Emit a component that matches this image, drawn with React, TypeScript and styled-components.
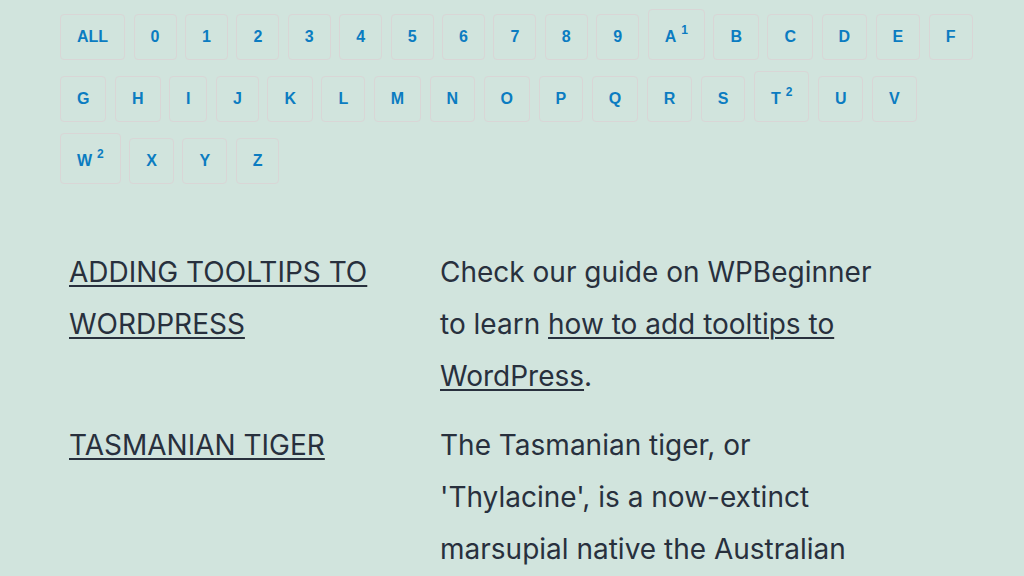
import styled, { createGlobalStyle } from "styled-components";

const GlobalStyle = createGlobalStyle`
  html, body {
    margin: 0;
    padding: 0;
    overflow: hidden;
    background: #d1e4dd;
  }
  body {
    font-family: Inter, "Noto Sans", sans-serif;
    color: #28303d;
  }
`;

const Page = styled.div`
  padding: 9px 0 0 60px;
`;

const LetterBar = styled.ul`
  list-style: none;
  margin: 0;
  padding: 0;
  width: 925px;
  display: flex;
  flex-wrap: wrap;
  align-items: flex-end;
  gap: 11px 8.5px;
`;

const LetterItem = styled.li`
  display: block;
`;

const LetterLink = styled.a<{ $hasCount?: boolean }>`
  display: block;
  box-sizing: border-box;
  padding: ${(p) => (p.$hasCount ? "17px" : "12px")} 16px 12px;
  border: 1px solid #d9d6d6;
  border-radius: 4px;
  font-family: "Liberation Sans", Arial, sans-serif;
  font-weight: 700;
  font-size: 16px;
  line-height: 20px;
  color: #0b7cc1;
  text-decoration: none;
  white-space: nowrap;
`;

const Count = styled.sup`
  display: inline-block;
  margin-left: 5px;
  font-size: 12px;
  line-height: 0;
  vertical-align: 8px;
`;

const Glossary = styled.dl`
  margin: 62px 0 0 9px;
  padding: 0;
  display: grid;
  grid-template-columns: 371px 445px;
  row-gap: 17px;
  font-size: 28px;
  line-height: 52px;
`;

const Term = styled.dt`
  margin: 0;
  text-transform: uppercase;
`;

const Definition = styled.dd`
  margin: 0;
`;

const TextLink = styled.a`
  color: #28303d;
  text-decoration: underline;
  text-decoration-thickness: 1.5px;
  text-underline-offset: 3px;
`;

type Letter = { label: string; count?: number };

const letters: Letter[] = [
  { label: "ALL" },
  ..."0123456789".split("").map((l) => ({ label: l })),
  ..."ABCDEFGHIJKLMNOPQRSTUVWXYZ".split("").map((l) => ({
    label: l,
    count: l === "A" ? 1 : l === "T" || l === "W" ? 2 : undefined,
  })),
];

export default function App() {
  return (
    <Page>
      <GlobalStyle />
      <LetterBar>
        {letters.map((letter) => (
          <LetterItem key={letter.label}>
            <LetterLink href="#" $hasCount={!!letter.count}>
              {letter.label}
              {letter.count && <Count>{letter.count}</Count>}
            </LetterLink>
          </LetterItem>
        ))}
      </LetterBar>

      <Glossary>
        <Term>
          <TextLink href="#">Adding Tooltips to WordPress</TextLink>
        </Term>
        <Definition>
          Check our guide on WPBeginner to learn{" "}
          <TextLink href="#">how to add tooltips to WordPress</TextLink>.
        </Definition>
        <Term>
          <TextLink href="#">Tasmanian Tiger</TextLink>
        </Term>
        <Definition>
          The Tasmanian tiger, or 'Thylacine', is a now-extinct marsupial
          native the Australian mainland, Tasmania and New Guinea.
        </Definition>
      </Glossary>
    </Page>
  );
}
